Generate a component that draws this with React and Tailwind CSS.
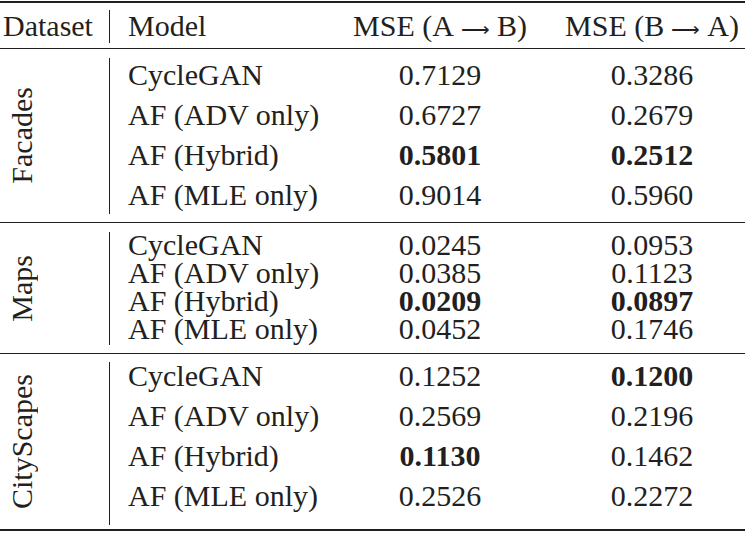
const sections = [
  {
    name: "Facades",
    blockH: "h-[173px]",
    pad: "pt-[6px]",
    rowH: "h-[40px]",
    bar: "mt-[9px] mb-[8px]",
    rows: [
      ["CycleGAN", "0.7129", "0.3286", false, false],
      ["AF (ADV only)", "0.6727", "0.2679", false, false],
      ["AF (Hybrid)", "0.5801", "0.2512", true, true],
      ["AF (MLE only)", "0.9014", "0.5960", false, false],
    ],
  },
  {
    name: "Maps",
    blockH: "h-[130px]",
    pad: "pt-[8px]",
    rowH: "h-[28px]",
    bar: "mt-[9px] mb-[8px]",
    rows: [
      ["CycleGAN", "0.0245", "0.0953", false, false],
      ["AF (ADV only)", "0.0385", "0.1123", false, false],
      ["AF (Hybrid)", "0.0209", "0.0897", true, true],
      ["AF (MLE only)", "0.0452", "0.1746", false, false],
    ],
  },
  {
    name: "CityScapes",
    blockH: "h-[175px]",
    pad: "pt-[2px]",
    rowH: "h-[40px]",
    bar: "mt-[8px] mb-[4px]",
    rows: [
      ["CycleGAN", "0.1252", "0.1200", false, true],
      ["AF (ADV only)", "0.2569", "0.2196", false, false],
      ["AF (Hybrid)", "0.1130", "0.1462", true, false],
      ["AF (MLE only)", "0.2526", "0.2272", false, false],
    ],
  },
];

function Rule({ thick }) {
  return <div className={thick ? "h-[2px] bg-[#231f20]" : "h-px bg-[#231f20]"} />;
}

// LaTeX-style \rightarrow: long thin arrow with space either side
function Arrow() {
  return (
    <span className="mx-[7px] inline-block font-['DejaVu_Sans',sans-serif] text-[20px] font-extralight">
      ⟶
    </span>
  );
}

function Section({ s }) {
  return (
    <div className={`flex ${s.blockH}`}>
      <div className="flex w-[109px] items-center">
        <div className="flex w-[44px] justify-center">
          <span className="rotate-180 leading-none [writing-mode:vertical-rl]">{s.name}</span>
        </div>
      </div>
      <div className={`w-px bg-[#231f20] ${s.bar}`} />
      <div className={`flex flex-1 flex-col ${s.pad}`}>
        {s.rows.map(([model, ab, ba, bAB, bBA]) => (
          <div key={model} className={`flex items-center leading-[26px] ${s.rowH}`}>
            <div className="w-[230px] pl-[18px]">{model}</div>
            <div className={`w-[200px] text-center ${bAB ? "font-bold" : ""}`}>{ab}</div>
            <div className={`w-[205px] pl-[19px] text-center ${bBA ? "font-bold" : ""}`}>{ba}</div>
          </div>
        ))}
      </div>
    </div>
  );
}

export default function App() {
  return (
    <div className="h-[537px] w-[745px] bg-white font-['Liberation_Serif',serif] text-[30px] text-[#231f20]">
      <div className="h-px" />
      <Rule thick />
      <div className="flex h-[45px]">
        <div className="flex w-[109px] items-center pl-[3px] leading-none">Dataset</div>
        <div className="mt-[7px] mb-[5px] w-px bg-[#231f20]" />
        <div className="flex flex-1 items-center leading-none">
          <div className="w-[230px] pl-[18px]">Model</div>
          <div className="w-[200px] whitespace-nowrap text-center">
            MSE (A<Arrow />B)
          </div>
          <div className="w-[205px] whitespace-nowrap pl-[19px] text-center">
            MSE (B<Arrow />A)
          </div>
        </div>
      </div>
      <Rule />
      <Section s={sections[0]} />
      <Rule />
      <Section s={sections[1]} />
      <Rule />
      <Section s={sections[2]} />
      <Rule thick />
    </div>
  );
}
